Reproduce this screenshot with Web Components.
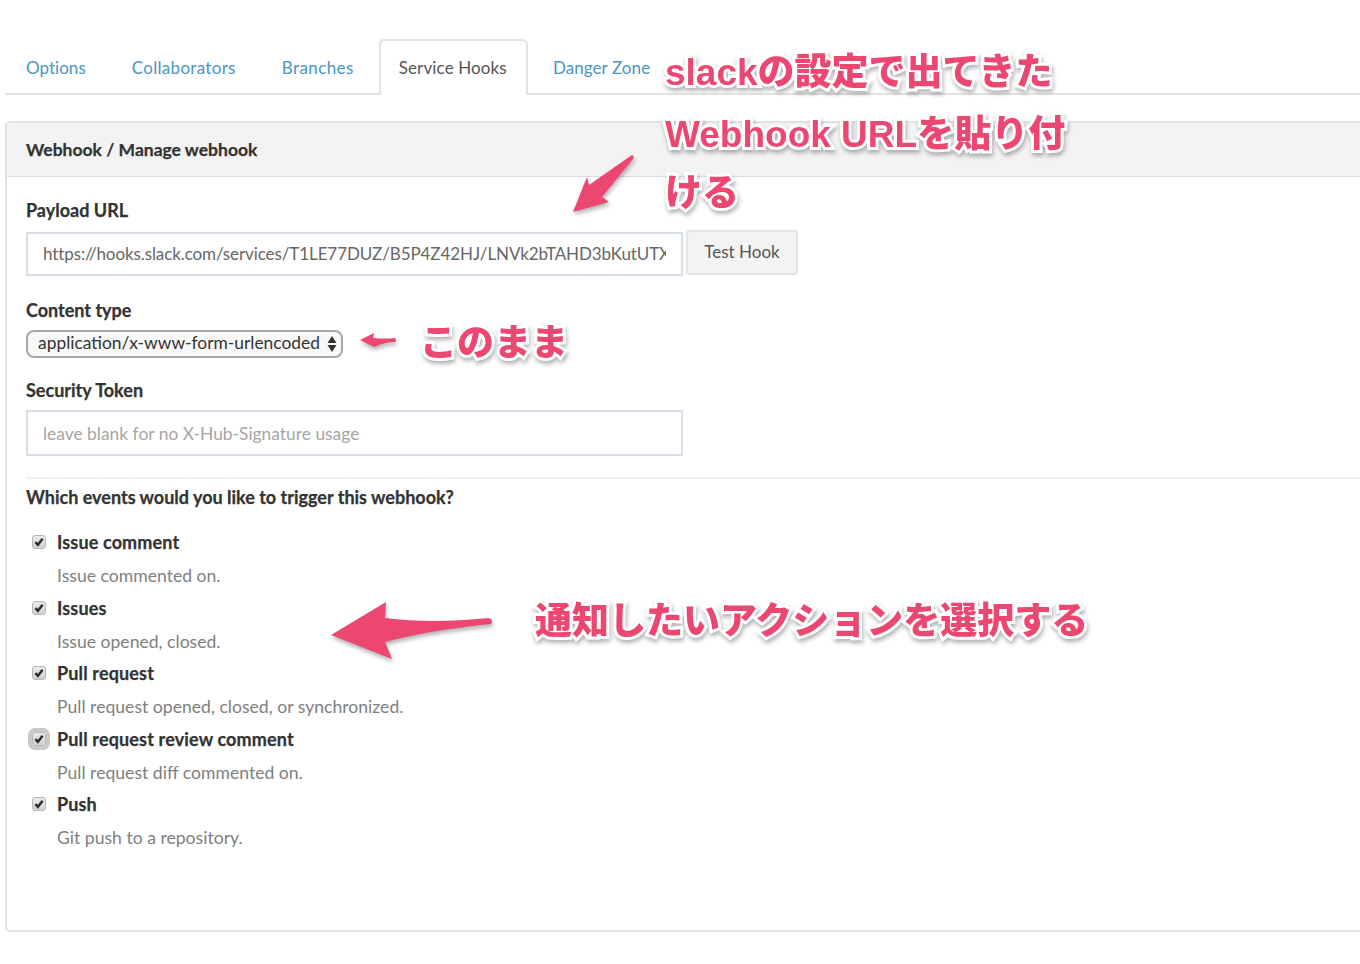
<!DOCTYPE html>
<html>
<head>
<meta charset="utf-8">
<title>Webhook</title>
<style>
  html, body { margin: 0; padding: 0; background: #fff; }
  body { font-family: "Lato", "Noto Sans", sans-serif; color: #333; height: 964px; overflow: hidden; position: relative; }
</style>
</head>
<body>
<settings-tabs></settings-tabs>
<webhook-panel title="Webhook / Manage webhook">
  <form-field label="Payload URL" style="--field-top: 22px; --label-gap: 11px">
    <text-box value="https://hooks.slack.com/services/T1LE77DUZ/B5P4Z42HJ/LNVk2bTAHD3bKutUTX" style="--box-h: 44px; --text-h: 40px"></text-box>
    <test-button>Test Hook</test-button>
  </form-field>
  <form-field label="Content type" style="--field-top: 23px">
    <select-box>application/x-www-form-urlencoded</select-box>
  </form-field>
  <form-field label="Security Token" style="--field-top: 21px">
    <text-box placeholder="leave blank for no X-Hub-Signature usage" style="--box-h: 46px; --text-h: 44px"></text-box>
  </form-field>
  <event-list>
    <event-row name="Issue comment" desc="Issue commented on."></event-row>
    <event-row name="Issues" desc="Issue opened, closed."></event-row>
    <event-row name="Pull request" desc="Pull request opened, closed, or synchronized."></event-row>
    <event-row name="Pull request review comment" desc="Pull request diff commented on." focused></event-row>
    <event-row name="Push" desc="Git push to a repository."></event-row>
  </event-list>
</webhook-panel>

<note-text x="665" y="43">slackの設定で出てきた</note-text>
<note-text x="665" y="105">Webhook URLを貼り付</note-text>
<note-text x="665" y="164">ける</note-text>
<note-text x="420" y="314">このまま</note-text>
<note-text x="535" y="592">通知したいアクションを選択する</note-text>

<note-arrow d="M632 155 Q635 157 633 159 L602 197 L609 202 L573 212 L587 177 L589 185 Z"></note-arrow>
<note-arrow d="M360 340 L374 333 L373 338 Q385 339 395 338 Q397 340 395 342 Q385 342 374 347 Z"></note-arrow>
<note-arrow d="M331 635 L386 602 L385 618 Q430 624 489 618 Q494 620 491 624 Q430 630 385 642 L392 659 Z"></note-arrow>

<script>
class SettingsTabs extends HTMLElement {
    constructor() {
        super();
        this.attachShadow({ mode: 'open' });
        // text widths differ from the original face, so each tab gets its own tracking
        const items = [
            ['Options', 0, .04], ['Collaborators', 0, .3], ['Branches', 0, .4],
            ['Service Hooks', 1, .13], ['Danger Zone', 0, .08]
        ];
        this.shadowRoot.innerHTML = `
<style>
  :host { display: block; margin: 39px 0 0 5px; }
  ul { display: flex; list-style: none; margin: 0; padding: 0 0 0 21px; gap: 46px; height: 56px; border-bottom: 2px solid #e3e3e3; box-sizing: border-box; }
  li { font-size: 17px; color: #4b94c4; padding-top: 19px; line-height: 20px; white-space: nowrap; }
  li.on { color: #555; background: #fff; border: 2px solid #e3e3e3; border-bottom: 0; border-radius: 5px 5px 0 0; height: 56px; box-sizing: border-box; padding: 17px 19px 0 18px; margin: 0 -21px; }
</style>
<ul>${items.map(([t, on, ls]) => `<li class="${on ? 'on' : ''}" style="letter-spacing:${ls}px">${t}</li>`).join('')}</ul>`;
    }
}

class WebhookPanel extends HTMLElement {
    constructor() {
        super();
        this.attachShadow({ mode: 'open' });
        this.shadowRoot.innerHTML = `
<style>
  :host { display: block; margin: 26px -6px 0 5px; border: 2px solid #e3e3e3; border-radius: 5px; height: 811px; box-sizing: border-box; }
  header { background: #f3f3f3; border-bottom: 1px solid #dcdcdc; height: 54px; box-sizing: border-box; padding: 16px 19px 0; font-size: 17.5px; font-weight: 700; -webkit-text-stroke: .25px #333; color: #333; line-height: 22px; }
  main { padding: 0 0 0 19px; }
</style>
<header>${this.getAttribute('title')}</header>
<main><slot></slot></main>`;
    }
}

class FormField extends HTMLElement {
    constructor() {
        super();
        this.attachShadow({ mode: 'open' });
        this.shadowRoot.innerHTML = `
<style>
  :host { display: block; padding-top: var(--field-top, 22px); }
  label { display: block; font-size: 18px; font-weight: 700; -webkit-text-stroke: .25px #333; line-height: 22px; margin-bottom: var(--label-gap, 9px); color: #333; }
  .row { display: flex; align-items: flex-start; gap: 3px; }
</style>
<label>${this.getAttribute('label')}</label>
<div class="row"><slot></slot></div>`;
    }
}

class TextBox extends HTMLElement {
    constructor() {
        super();
        this.attachShadow({ mode: 'open' });
        const ph = this.getAttribute('placeholder');
        this.shadowRoot.innerHTML = `
<style>
  :host { display: block; width: 657px; height: var(--box-h, 46px); border: 2px solid #d9dfe8; box-sizing: border-box; background: #fff; overflow: hidden; }
  div { margin: 0 15px; height: var(--text-h, 42px); line-height: var(--text-h, 42px); font-size: ${ph ? 17.4 : 17}px; white-space: nowrap; overflow: hidden; color: ${ph ? '#a5a5a5' : '#666'}; letter-spacing: ${ph ? 0 : -.1}px; }
</style>
<div>${ph || this.getAttribute('value')}</div>`;
    }
}

class TestButton extends HTMLElement {
    constructor() {
        super();
        this.attachShadow({ mode: 'open' });
        this.shadowRoot.innerHTML = `
<style>
  :host { display: block; width: 112px; height: 45px; margin-top: -2px; border: 2px solid #e3e5e8; border-radius: 3px; box-sizing: border-box; background: #f3f3f3; color: #555; font-size: 17px; line-height: 40px; text-align: center; }
</style>
<slot></slot>`;
    }
}

class SelectBox extends HTMLElement {
    constructor() {
        super();
        this.attachShadow({ mode: 'open' });
        this.shadowRoot.innerHTML = `
<style>
  :host { display: flex; align-items: center; justify-content: space-between; width: 317px; height: 28px; border: 2px solid #a8a8a8; border-radius: 8px; box-sizing: border-box; background: #f8f8f8; color: #333; font-size: 17.4px; line-height: 20px; padding: 0 4px 0 10px; white-space: nowrap; }
  span { position: relative; top: -1.5px; }
  svg { flex: none; }
</style>
<span><slot></slot></span>
<svg width="10" height="18" viewBox="0 0 10 18"><path d="M5 1 L9.5 8 H.5 Z M5 17 L9.5 10 H.5 Z" fill="#333"/></svg>`;
    }
}

class EventList extends HTMLElement {
    constructor() {
        super();
        this.attachShadow({ mode: 'open' });
        this.shadowRoot.innerHTML = `
<style>
  :host { display: block; margin-top: 21px; border-top: 2px solid #f1f1f1; }
  h3 { margin: 7px 0 0; font-size: 18px; line-height: 22px; font-weight: 700; -webkit-text-stroke: .25px #333; color: #333; }
  div { padding-top: 23px; }
</style>
<h3>Which events would you like to trigger this webhook?</h3>
<div><slot></slot></div>`;
    }
}

class EventRow extends HTMLElement {
    constructor() {
        super();
        this.attachShadow({ mode: 'open' });
        const ring = this.hasAttribute('focused') ? 'box-shadow: 0 0 0 4px #c9c9c9;' : '';
        this.shadowRoot.innerHTML = `
<style>
  :host { display: grid; grid-template-columns: 31px 1fr; height: 65.5px; align-content: start; }
  .box { width: 14px; height: 14px; margin: 4px 0 0 5.5px; border: 1px solid #b8b8b8; border-radius: 3px; box-sizing: border-box; background: linear-gradient(#e9e9e9, #d2d2d2); display: flex; align-items: center; justify-content: center; ${ring} }
  b { font-size: 18px; line-height: 22px; letter-spacing: .15px; -webkit-text-stroke: .25px #333; color: #333; }
  p { grid-column: 2; margin: 12px 0 0; font-size: 17.6px; line-height: 22px; color: #808080; }
</style>
<span class="box"><svg width="10" height="10" viewBox="0 0 10 10"><path d="M1.4 5.2 L3.9 7.8 L8.6 1.8" fill="none" stroke="#2b2b2b" stroke-width="2.4"/></svg></span>
<b>${this.getAttribute('name')}</b>
<p>${this.getAttribute('desc')}</p>`;
    }
}

// overlays: screenshot annotations sit on a free canvas on top of the form
class NoteText extends HTMLElement {
    constructor() {
        super();
        this.attachShadow({ mode: 'open' });
        this.shadowRoot.innerHTML = `
<style>
  :host { position: absolute; left: ${this.getAttribute('x')}px; top: ${this.getAttribute('y')}px; white-space: nowrap; filter: drop-shadow(1px 3px 2px rgba(0,0,0,.3)); }
  span { font-family: "Liberation Sans", "Noto Sans CJK JP", sans-serif; font-weight: 900; font-size: 37px; line-height: 60px; color: #ec4771; -webkit-text-stroke: 6px #fff; paint-order: stroke fill; }
</style>
<span><slot></slot></span>`;
    }
}

class NoteArrow extends HTMLElement {
    constructor() {
        super();
        this.attachShadow({ mode: 'open' });
        this.shadowRoot.innerHTML = `
<style>
  :host { position: absolute; left: 0; top: 0; width: 1360px; height: 964px; pointer-events: none; }
  svg { display: block; overflow: visible; filter: drop-shadow(1px 3px 2px rgba(0,0,0,.3)); }
</style>
<svg width="1360" height="964" viewBox="0 0 1360 964"><path d="${this.getAttribute('d')}" fill="#ec4771"/></svg>`;
    }
}

customElements.define('settings-tabs', SettingsTabs);
customElements.define('webhook-panel', WebhookPanel);
customElements.define('form-field', FormField);
customElements.define('text-box', TextBox);
customElements.define('test-button', TestButton);
customElements.define('select-box', SelectBox);
customElements.define('event-list', EventList);
customElements.define('event-row', EventRow);
customElements.define('note-text', NoteText);
customElements.define('note-arrow', NoteArrow);
</script>
</body>
</html>
